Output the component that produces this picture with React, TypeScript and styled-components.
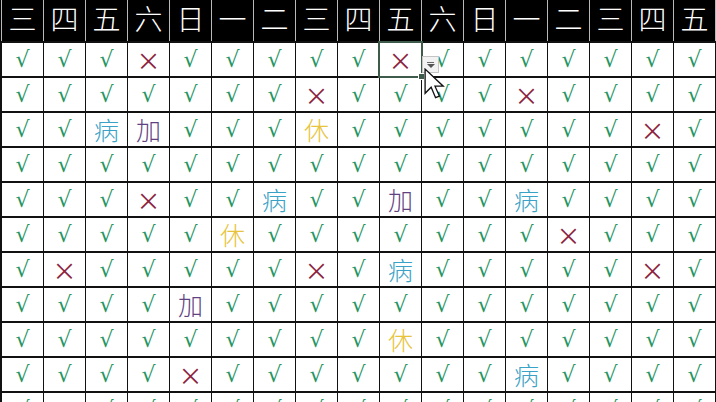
import React from "react";
import styled, { createGlobalStyle } from "styled-components";

const GlobalStyle = createGlobalStyle`
  html, body { margin: 0; padding: 0; background: #ffffff; overflow: hidden; }
  body { font-family: "Noto Sans CJK SC", "Noto Sans", sans-serif; }
`;

const HEAD = ["三", "四", "五", "六", "日", "一", "二", "三", "四", "五", "六", "日", "一", "二", "三", "四", "五"];

const ROWS = [
  "vvvxvvvvvxvvvvvvv",
  "vvvvvvvxvvvvxvvvv",
  "vvbjvvvhvvvvvvvxv",
  "vvvvvvvvvvvvvvvvv",
  "vvvxvvbvvjvvbvvvv",
  "vvvvvhvvvvvvvxvvv",
  "vxvvvvvxvbvvvvvxv",
  "vvvvjvvvvvvvvvvvv",
  "vvvvvvvvvhvvvvvvv",
  "vvvvxvvvvvvvbvvvv",
  "vxvvvvvvvvvvvvvvv",
];

type Kind = "v" | "x" | "b" | "j" | "h";

const GLYPH: Record<Kind, string> = { v: "√", x: "×", b: "病", j: "加", h: "休" };
const COLOR: Record<Kind, string> = {
  v: "#25945f",
  x: "#8c2240",
  b: "#3aa2c6",
  j: "#5f4282",
  h: "#e7c43c",
};
const SIZE: Record<Kind, number> = { v: 22, x: 24, b: 25, j: 25, h: 25 };
const FONT: Record<Kind, string> = {
  v: '"DejaVu Sans", sans-serif',
  x: '"Noto Sans CJK SC", sans-serif',
  b: '"Noto Sans CJK SC", sans-serif',
  j: '"Noto Sans CJK SC", sans-serif',
  h: '"Noto Sans CJK SC", sans-serif',
};

const Sheet = styled.div`
  width: 716px;
  display: flex;
  flex-direction: column;
`;

const HeaderRow = styled.div`
  display: grid;
  grid-template-columns: repeat(17, 41px);
  column-gap: 1px;
  height: 41px;
  padding: 0 1px 0 1px;
  border-left: 1px solid #000;
  background: #b9b9b9;
`;

const HeadCell = styled.div`
  background: #000;
  color: #fff;
  display: flex;
  align-items: center;
  justify-content: center;
  font-size: 28px;
  font-weight: 300;
  line-height: 1;
  padding-bottom: 5px;
`;

const Body = styled.div`
  display: grid;
  grid-template-columns: repeat(17, 41px);
  grid-auto-rows: 33px;
  column-gap: 1px;
  row-gap: 2px;
  padding: 2px 1px 0 2px;
  background: #111;
`;

const Cell = styled.div<{ $selected?: boolean }>`
  position: relative;
  background: #fff;
  display: flex;
  align-items: center;
  justify-content: center;
  z-index: ${(p) => (p.$selected ? 2 : 0)};
  box-shadow: ${(p) => (p.$selected ? "0 0 0 2px #3d5a4b" : "none")};
`;

const Mark = styled.span<{ $kind: Kind }>`
  color: ${(p) => COLOR[p.$kind]};
  font-family: ${(p) => FONT[p.$kind]};
  font-size: ${(p) => SIZE[p.$kind]}px;
  font-weight: ${(p) => (p.$kind === "v" || p.$kind === "x" ? 400 : 300)};
  line-height: 1;
`;

const FillHandle = styled.span`
  position: absolute;
  right: -4px;
  bottom: -4px;
  width: 5px;
  height: 5px;
  background: #3d5a4b;
  border: 1px solid #fff;
`;

const DropButton = styled.span`
  position: absolute;
  left: 42px;
  top: 13px;
  width: 17px;
  height: 17px;
  box-sizing: border-box;
  border: 1px solid #c4c4c4;
  background: #f2f2f2;
  display: flex;
  flex-direction: column;
  align-items: center;
  padding-top: 5px;
  gap: 1px;
`;

const DropBar = styled.span`
  width: 7px;
  height: 1px;
  background: #6a6a6a;
`;

const DropArrow = styled.span`
  width: 0;
  height: 0;
  border-left: 4px solid transparent;
  border-right: 4px solid transparent;
  border-top: 4px solid #555;
`;

const Pointer = styled.svg`
  position: absolute;
  left: 44px;
  top: 25px;
  width: 22px;
  height: 33px;
`;

export default function App() {
  return (
    <>
      <GlobalStyle />
      <Sheet>
        <HeaderRow>
          {HEAD.map((h, i) => (
            <HeadCell key={i}>{h}</HeadCell>
          ))}
        </HeaderRow>
        <Body>
          {ROWS.map((row, r) =>
            row.split("").map((c, ci) => {
              const k = c as Kind;
              const sel = r === 0 && ci === 9;
              return (
                <Cell key={`${r}-${ci}`} $selected={sel}>
                  <Mark $kind={k}>{GLYPH[k]}</Mark>
                  {sel && (
                    <>
                      <FillHandle />
                      <DropButton>
                        <DropBar />
                        <DropArrow />
                      </DropButton>
                      <Pointer viewBox="0 0 20 30">
                        <path
                          d="M1 1 L1 23 L6.5 17.5 L10.5 27 L14 25.5 L10 16.5 L17.5 16.5 Z"
                          fill="#fff"
                          stroke="#111"
                          strokeWidth="1.2"
                          strokeLinejoin="miter"
                        />
                      </Pointer>
                    </>
                  )}
                </Cell>
              );
            })
          )}
        </Body>
      </Sheet>
    </>
  );
}
